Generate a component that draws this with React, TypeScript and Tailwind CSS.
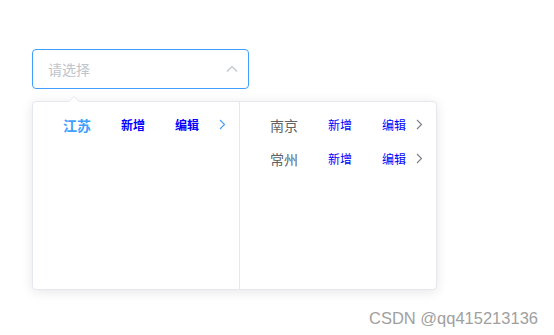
import React from 'react';

const cjk = { fontFamily: '"Noto Sans CJK SC", "Noto Sans", sans-serif' };

const ChevronRight = ({ color }: { color: string }) => (
  <svg width="7" height="11" viewBox="0 0 7 11" fill="none">
    <path d="M1 1l4.5 4.5L1 10" stroke={color} strokeWidth="1.1" />
  </svg>
);

const Node = ({ label, active }: { label: string; active?: boolean }) => (
  <div className="relative flex h-[34px] items-center pl-[30px]">
    <span className={`w-[28px] text-[14px] ${active ? 'font-semibold text-[#409eff]' : 'text-[#606266]'}`}>{label}</span>
    <span className={`ml-[30px] w-[24px] text-[12px] text-[#0000ff] ${active ? 'font-bold' : ''}`}>新增</span>
    <span className={`ml-[30px] w-[24px] text-[12px] text-[#0000ff] ${active ? 'font-bold' : ''}`}>编辑</span>
    <span className="absolute right-[13px] top-[11px] flex">
      <ChevronRight color={active ? '#409eff' : '#7a7d85'} />
    </span>
  </div>
);

export default function App() {
  return (
    <div className="relative h-[335px] w-[554px] bg-white" style={cjk}>
      <div className="pl-[32px] pt-[49px]">
        <div className="flex h-[40px] w-[217px] items-center justify-between rounded-[4px] border border-[#409eff] pl-[15px] pr-[10px]">
          <span className="text-[14px] text-[#c0c4cc]">请选择</span>
          <svg width="12" height="8" viewBox="0 0 12 8" fill="none">
            <path d="M1 6.5L6 1.5l5 5" stroke="#c0c4cc" strokeWidth="1.2" />
          </svg>
        </div>
        <div className="relative mt-[12px] flex h-[189px] w-[405px] rounded-[4px] border border-[#e4e7ed] bg-white shadow-[0_2px_12px_rgba(0,0,0,0.1)]">
          <div className="absolute left-[35px] top-[-6px] h-0 w-0 border-x-[6px] border-b-[6px] border-x-transparent border-b-[#e4e7ed]" />
          <div className="absolute left-[36px] top-[-5px] h-0 w-0 border-x-[5px] border-b-[5px] border-x-transparent border-b-white" />
          <div className="w-[207px] border-r border-[#e4e7ed] py-[6px]">
            <Node label="江苏" active />
          </div>
          <div className="flex-1 py-[6px]">
            <Node label="南京" />
            <Node label="常州" />
          </div>
        </div>
      </div>
      <div
        className="absolute right-[16px] top-[306px] text-[16.5px] text-[#a0a0a0]"
        style={{ fontFamily: '"Liberation Sans", Arial, sans-serif' }}
      >
        CSDN @qq415213136
      </div>
    </div>
  );
}
